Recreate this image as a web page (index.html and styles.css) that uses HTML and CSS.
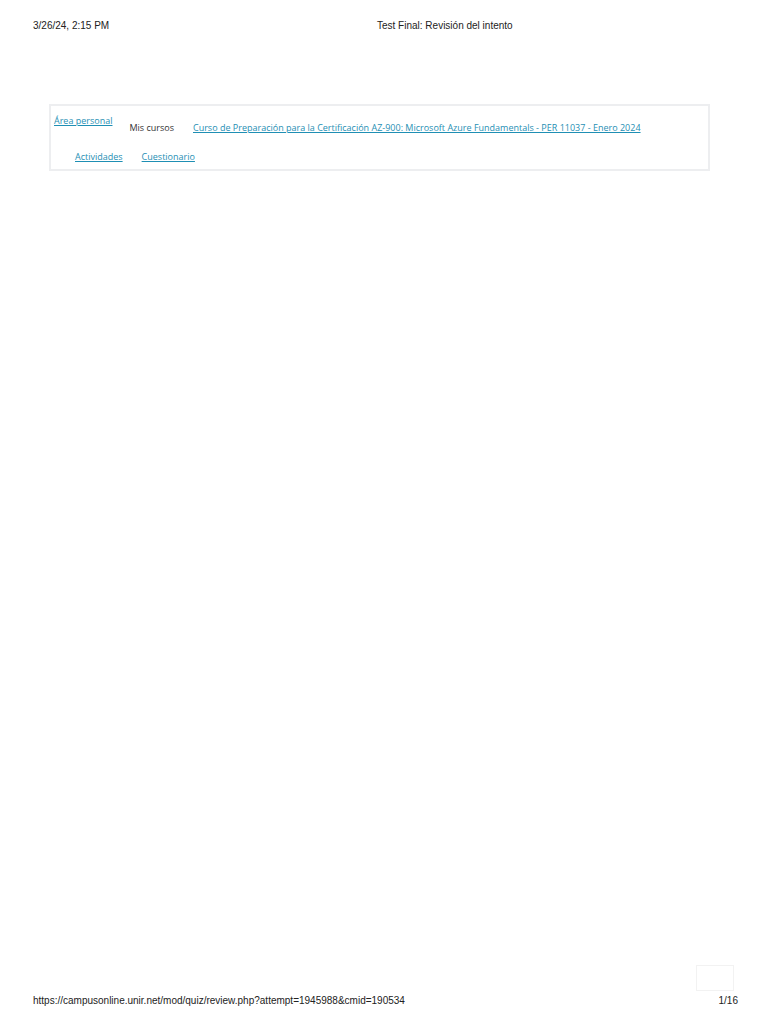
FILE: index.html
```html
<!DOCTYPE html>
<html lang="es">
<head>
<meta charset="utf-8">
<title>Test Final: Revisión del intento</title>
<link rel="stylesheet" href="styles.css">
</head>
<body>
<div class="page">
  <header class="print-head">
    <span class="date">3/26/24, 2:15 PM</span>
    <span class="title">Test Final: Revisión del intento</span>
    <span class="spacer"></span>
  </header>
  <main class="content">
    <nav class="crumbs">
      <div class="row row1">
        <a class="crumb first" href="#">Área personal</a>
        <span class="crumb plain">Mis cursos</span>
        <a class="crumb" href="#">Curso de Preparación para la Certificación AZ-900: Microsoft Azure Fundamentals - PER 11037 - Enero 2024</a>
      </div>
      <div class="row row2">
        <a class="crumb" href="#">Actividades</a>
        <a class="crumb" href="#">Cuestionario</a>
      </div>
    </nav>
  </main>
  <div class="footer-wrap">
    <div class="ghost-box"></div>
    <footer class="print-foot">
      <span class="url">https://campusonline.unir.net/mod/quiz/review.php?attempt=1945988&amp;cmid=190534</span>
      <span class="pages">1/16</span>
    </footer>
  </div>
</div>
</body>
</html>
```
FILE: styles.css
```css
html, body {
  margin: 0;
  padding: 0;
  background: #ffffff;
}
.page {
  width: 768px;
  height: 1024px;
  display: flex;
  flex-direction: column;
  box-sizing: border-box;
}
.print-head {
  display: flex;
  align-items: center;
  padding: 18px 30px 0 33px;
  height: 14px;
  font-family: "Liberation Sans", Arial, sans-serif;
  font-size: 10px;
  color: #222;
}
.print-head .date { width: 344px; }
.print-head .title { flex: 0 0 auto; }
.print-head .spacer { flex: 1; }
.content {
  flex: 1;
  padding: 72px 58px 0 49px;
}
.crumbs {
  border: 2px solid #edeef0;
  padding: 8px 4px 4px 3px;
  height: 51px;
  font-family: "Open Sans", "Noto Sans", sans-serif;
  font-size: 9px;
  color: #333;
}
.row {
  display: flex;
  align-items: flex-start;
}
.row1 { height: 36px; }
.row2 { padding-left: 21px; gap: 19px; }
.crumb {
  color: #1f8fb4;
  text-decoration: underline;
  text-underline-offset: 1px;
}
.crumb.first { margin-right: 17px; }
.crumb.plain {
  color: #333;
  text-decoration: none;
  margin-top: 7px;
  margin-right: 19px;
}
.row1 .crumb:last-child { margin-top: 7px; }
.footer-wrap {
  display: flex;
  flex-direction: column;
  align-items: flex-end;
  padding: 0 30px 18px 33px;
}
.ghost-box {
  width: 36px;
  height: 24px;
  border: 1px solid #f2f2f2;
  margin-right: 4px;
  margin-bottom: 4px;
}
.print-foot {
  align-self: stretch;
  display: flex;
  justify-content: space-between;
  font-family: "Liberation Sans", Arial, sans-serif;
  font-size: 10px;
  color: #222;
}
```
